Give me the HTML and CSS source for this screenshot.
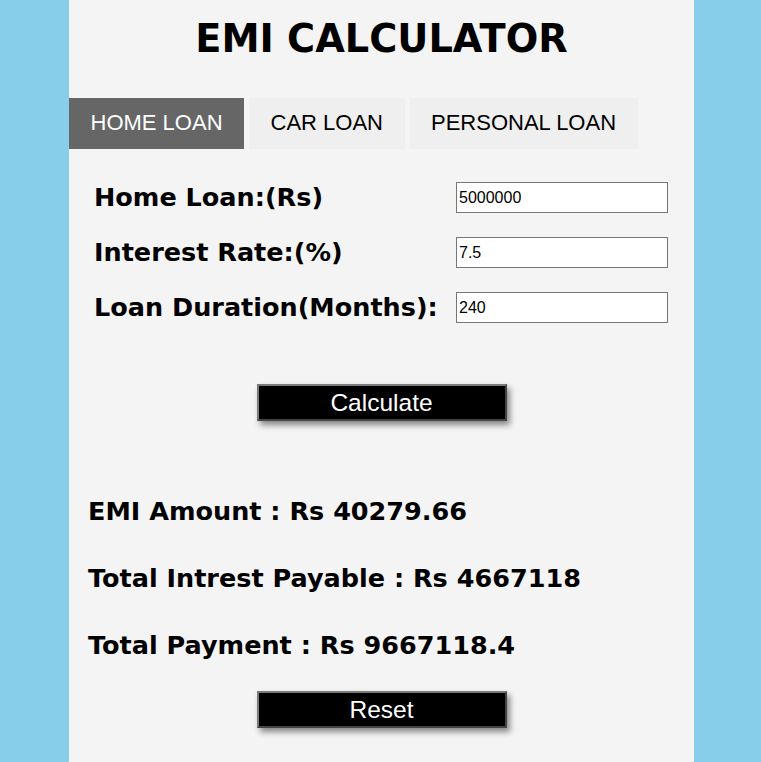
FILE: index.html
```html
<!DOCTYPE html>
<html lang="en">
<head>
<meta charset="utf-8">
<title>EMI Calculator</title>
<link rel="stylesheet" href="styles.css">
</head>
<body>
<div class="panel">
  <h1 class="title">EMI CALCULATOR</h1>
  <div class="tabs">
    <button class="tab active">HOME LOAN</button>
    <button class="tab">CAR LOAN</button>
    <button class="tab">PERSONAL LOAN</button>
  </div>
  <div class="form">
    <div class="row">
      <label class="label">Home Loan:(Rs)</label>
      <input class="field" type="text" value="5000000">
    </div>
    <div class="row">
      <label class="label">Interest Rate:(%)</label>
      <input class="field" type="text" value="7.5">
    </div>
    <div class="row">
      <label class="label">Loan Duration(Months):</label>
      <input class="field" type="text" value="240">
    </div>
  </div>
  <button class="action calc">Calculate</button>
  <div class="results">
    <p class="result">EMI Amount : Rs 40279.66</p>
    <p class="result">Total Intrest Payable : Rs 4667118</p>
    <p class="result">Total Payment : Rs 9667118.4</p>
  </div>
  <button class="action reset">Reset</button>
</div>
</body>
</html>
```

FILE: styles.css
```css
html, body {
  margin: 0;
  padding: 0;
}
body {
  background: #87ceeb;
  font-family: "DejaVu Sans", Verdana, sans-serif;
}
.panel {
  width: 625px;
  margin-left: 69px;
  min-height: 762px;
  box-sizing: border-box;
  background: #f4f4f4;
  padding-top: 17px;
  display: flex;
  flex-direction: column;
}
.title {
  margin: 0;
  font-family: "DejaVu Sans", Verdana, sans-serif;
  font-weight: bold;
  font-size: 38.3px;
  line-height: 44px;
  text-align: center;
  color: #000;
}
.tabs {
  display: flex;
  gap: 5px;
  margin-top: 37px;
}
.tab {
  border: none;
  margin: 0;
  background: #efefef;
  color: #000;
  font-family: "Liberation Sans", Arial, sans-serif;
  font-size: 22px;
  line-height: 25px;
  padding: 12px 21.5px 14px;
  cursor: pointer;
}
.tab.active {
  background: #666;
  color: #fff;
}
.form {
  margin-top: 33px;
  display: flex;
  flex-direction: column;
  gap: 24px;
  padding: 0 26px 0 25px;
}
.row {
  display: flex;
  justify-content: space-between;
  align-items: center;
  height: 31px;
}
.label {
  font-weight: bold;
  font-size: 25.5px;
  line-height: 29px;
  color: #000;
}
.field {
  width: 212px;
  height: 31px;
  box-sizing: border-box;
  border: 1px solid #767676;
  border-radius: 0;
  background: #fff;
  padding: 1px 2px;
  margin: 0;
  font-family: "Liberation Sans", Arial, sans-serif;
  font-size: 16px;
  color: #000;
}
.action {
  display: block;
  align-self: center;
  width: 40%;
  height: 37px;
  box-sizing: border-box;
  padding: 0;
  background: #000;
  color: #fff;
  font-family: "Liberation Sans", Arial, sans-serif;
  font-size: 24.5px;
  line-height: 33px;
  border-style: solid;
  border-width: 2px;
  border-color: #7a7a7a #444 #444 #7a7a7a;
  box-shadow: 3px 4px 6px rgba(0, 0, 0, 0.45);
  cursor: pointer;
}
.calc {
  margin-top: 61px;
}
.results {
  margin-top: 76px;
  padding-left: 19px;
  display: flex;
  flex-direction: column;
  gap: 38px;
}
.result {
  margin: 0;
  font-weight: bold;
  font-size: 25.5px;
  line-height: 29px;
  color: #000;
}
.reset {
  margin-top: 31px;
}
```
